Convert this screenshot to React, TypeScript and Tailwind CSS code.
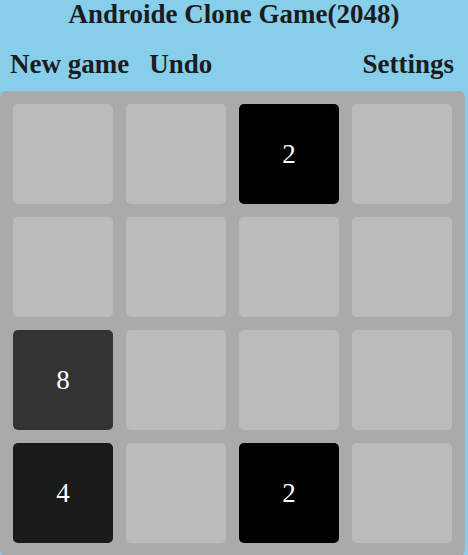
import React from 'react';

const board: number[][] = [
  [0, 0, 2, 0],
  [0, 0, 0, 0],
  [8, 0, 0, 0],
  [4, 0, 2, 0],
];

const tileBg = (v: number) => {
  if (v === 2) return 'bg-[#000000] text-white';
  if (v === 4) return 'bg-[#1a1a1a] text-white';
  if (v === 8) return 'bg-[#333333] text-white';
  return 'bg-[#bbbbbb]';
};

const Tile: React.FC<{ value: number }> = ({ value }) => (
  <div className={`w-[100px] h-[100px] rounded-[5px] flex items-center justify-center text-[27px] ${tileBg(value)}`}>
    {value > 0 ? value : ''}
  </div>
);

export default function App() {
  return (
    <div className="w-[468px] h-[555px] overflow-hidden bg-[#87ceeb] text-[#1c1c1c]" style={{ fontFamily: '"Liberation Serif", "Times New Roman", serif' }}>
      <h1 className="text-center font-bold text-[27px] leading-[30px] -mt-px">Androide Clone Game(2048)</h1>
      <div className="flex items-center px-[10px] mt-[20px] h-[30px] font-bold text-[27px] leading-[27px]">
        <button className="font-bold">New game</button>
        <button className="font-bold ml-[20px]">Undo</button>
        <button className="font-bold ml-auto mr-[4px]">Settings</button>
      </div>
      <div className="mt-[12px] w-[465px] bg-[#aaaaaa] rounded-[6px] p-[13px] pr-[12px] grid grid-cols-[repeat(4,100px)] gap-[13px]">
        {board.flat().map((v, i) => (
          <Tile key={i} value={v} />
        ))}
      </div>
    </div>
  );
}
